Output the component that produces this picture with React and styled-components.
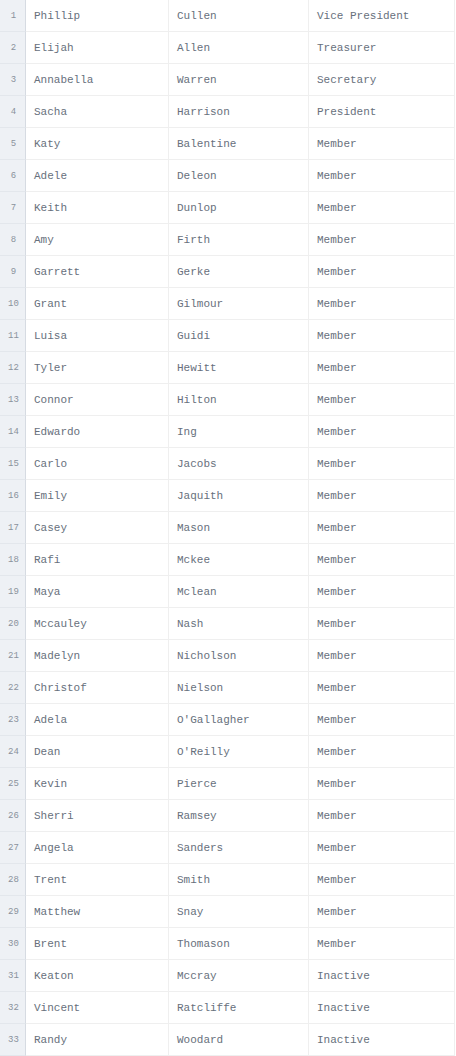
import React from 'react'
import styled, { createGlobalStyle } from 'styled-components'

const people = [
  ['Phillip', 'Cullen', 'Vice President'],
  ['Elijah', 'Allen', 'Treasurer'],
  ['Annabella', 'Warren', 'Secretary'],
  ['Sacha', 'Harrison', 'President'],
  ['Katy', 'Balentine', 'Member'],
  ['Adele', 'Deleon', 'Member'],
  ['Keith', 'Dunlop', 'Member'],
  ['Amy', 'Firth', 'Member'],
  ['Garrett', 'Gerke', 'Member'],
  ['Grant', 'Gilmour', 'Member'],
  ['Luisa', 'Guidi', 'Member'],
  ['Tyler', 'Hewitt', 'Member'],
  ['Connor', 'Hilton', 'Member'],
  ['Edwardo', 'Ing', 'Member'],
  ['Carlo', 'Jacobs', 'Member'],
  ['Emily', 'Jaquith', 'Member'],
  ['Casey', 'Mason', 'Member'],
  ['Rafi', 'Mckee', 'Member'],
  ['Maya', 'Mclean', 'Member'],
  ['Mccauley', 'Nash', 'Member'],
  ['Madelyn', 'Nicholson', 'Member'],
  ['Christof', 'Nielson', 'Member'],
  ['Adela', "O'Gallagher", 'Member'],
  ['Dean', "O'Reilly", 'Member'],
  ['Kevin', 'Pierce', 'Member'],
  ['Sherri', 'Ramsey', 'Member'],
  ['Angela', 'Sanders', 'Member'],
  ['Trent', 'Smith', 'Member'],
  ['Matthew', 'Snay', 'Member'],
  ['Brent', 'Thomason', 'Member'],
  ['Keaton', 'Mccray', 'Inactive'],
  ['Vincent', 'Ratcliffe', 'Inactive'],
  ['Randy', 'Woodard', 'Inactive'],
]

const GlobalStyle = createGlobalStyle`
  body {
    margin: 0;
    background: #fff;
  }
`

const App = () => {
  return (
    <>
      <GlobalStyle />
      <Sheet>
        {people.map((row, i) => (
          <Row key={i}>
            <RowNumber>{i + 1}</RowNumber>
            {row.map((value, j) => (
              <Cell key={j}>{value}</Cell>
            ))}
          </Row>
        ))}
      </Sheet>
    </>
  )
}

export default App

const Sheet = styled.div`
  width: 456px;
  font-family: 'Liberation Mono', 'DejaVu Sans Mono', monospace;
  color: #67707c;
`

const Row = styled.div`
  display: grid;
  grid-template-columns: 26px 143px 140px 146px;
  height: 32px;
`

const RowNumber = styled.div`
  display: flex;
  align-items: center;
  justify-content: center;
  padding: 1px 0 0 2px;
  background: #eef1f5;
  border-right: 1px solid #d6dbe2;
  border-bottom: 1px solid #e3e7ec;
  font-size: 9px;
  color: #8a929c;
`

const Cell = styled.div`
  display: flex;
  align-items: center;
  padding: 1px 8px 0;
  border-right: 1px solid #efefef;
  border-bottom: 1px solid #efefef;
  font-size: 11px;
  white-space: nowrap;
  overflow: hidden;
`
